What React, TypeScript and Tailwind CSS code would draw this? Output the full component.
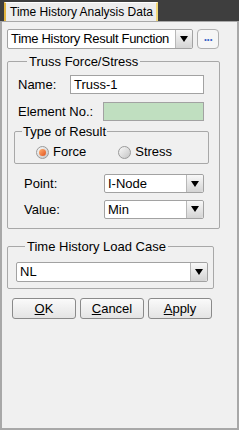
import React from "react";

const font = { fontFamily: '"Liberation Sans", Arial, sans-serif' };

function Arrow() {
    return (
        <div className="w-[17px] h-full flex items-center justify-center border-l border-[#b8b8b8] bg-gradient-to-b from-[#f8f8f8] to-[#d4d4d4] rounded-r-[2px]">
            <svg width="8" height="6" viewBox="0 0 8 6">
                <path d="M0 0H8L4 6Z" fill="#000" />
            </svg>
        </div>
    );
}

function Combo({ value, className, textClass = "" }: { value: string; className: string; textClass?: string }) {
    return (
        <div className={`flex items-stretch bg-white border border-[#a2a2a2] rounded-[2px] ${className}`}>
            <div className={`flex-1 pl-[3px] flex items-center overflow-hidden whitespace-nowrap ${textClass}`}>{value}</div>
            <Arrow />
        </div>
    );
}

function Radio({ checked }: { checked?: boolean }) {
    return (
        <div className="w-[13px] h-[13px] rounded-full border border-[#9a9a9a] bg-gradient-to-br from-[#fafafa] to-[#c4c4c4] flex items-center justify-center">
            {checked && <div className="w-[7px] h-[7px] rounded-full bg-gradient-to-br from-[#ffb070] to-[#e0501a]" />}
        </div>
    );
}

function Btn({ k, rest }: { k: string; rest: string }) {
    return (
        <button className="w-[64px] h-[21px] border border-[#8a8a8a] rounded-[3px] bg-gradient-to-b from-[#fafafa] to-[#e4e4e4] text-[13px] leading-none">
            <span className="underline">{k}</span>
            {rest}
        </button>
    );
}

export default function App() {
    return (
        <div className="w-[239px] h-[430px] bg-[#3e3e3e] flex flex-col text-[13px] text-black" style={font}>
            {/* Tab */}
            <div className="h-[21px] pt-[2px] pl-[4px] flex">
                <div className="h-[19px] pl-[4px] pr-[3px] flex items-center bg-[#ededed] border-l-2 border-r-2 border-t border-l-[#e2b440] border-r-[#f2d878] border-t-[#ffffff] whitespace-nowrap text-[12px]">
                    Time History Analysis Data
                </div>
            </div>

            {/* Body */}
            <div className="flex-1 bg-[#f0f0f0] border-l-2 border-r-2 border-b-2 border-t border-[#a8a8a8] pl-[5px] pt-[7px]">
                <div className="w-[212px] flex gap-[4px]">
                    <Combo
                        value="Time History Result Function"
                        className="w-[186px] h-[20px]"
                        textClass="pl-[2px] tracking-[-0.3px]"
                    />
                    <div className="w-[22px] h-[20px] border border-[#b0b0b0] rounded-[4px] bg-[#f6f6f6] flex items-end justify-center pb-[5px] text-[#3a64c8] text-[12px] leading-none tracking-[-0.5px] font-bold">
                        ...
                    </div>
                </div>

                {/* Truss Force/Stress */}
                <fieldset className="mt-[5px] w-[207px] border border-[#a8a8a8] rounded-[2px] px-[10px] pb-[9px]">
                    <legend className="ml-[9px] px-[2px] leading-[15px]">Truss Force/Stress</legend>
                    <div className="mt-[6px] flex items-center h-[19px]">
                        <span className="w-[52px]">Name:</span>
                        <div className="w-[134px] h-[19px] bg-white border border-[#a2a2a2] flex items-center pl-[3px]">Truss-1</div>
                    </div>
                    <div className="mt-[8px] flex items-center h-[19px]">
                        <span className="w-[85px]">Element No.:</span>
                        <div className="w-[101px] h-[19px] bg-[#c0dfc0] border border-[#a2a2a2]" />
                    </div>

                    <fieldset className="mt-[3px] -ml-[4px] w-[195px] border border-[#a8a8a8] rounded-[2px] pb-[3px]">
                        <legend className="ml-[7px] px-[1px] leading-[15px]">Type of Result</legend>
                        <div className="mt-[5px] h-[16px] flex items-center">
                            <div className="ml-[21px]"><Radio checked /></div>
                            <span className="ml-[4px]">Force</span>
                            <div className="ml-[32px]"><Radio /></div>
                            <span className="ml-[4px]">Stress</span>
                        </div>
                    </fieldset>

                    <div className="mt-[10px] flex items-center pl-[6px]">
                        <span className="w-[80px]">Point:</span>
                        <Combo value="I-Node" className="w-[100px] h-[19px]" />
                    </div>
                    <div className="mt-[6px] flex items-center pl-[6px]">
                        <span className="w-[80px]">Value:</span>
                        <Combo value="Min" className="w-[100px] h-[19px]" />
                    </div>
                </fieldset>

                {/* Time History Load Case */}
                <fieldset className="mt-[10px] w-[207px] border border-[#a8a8a8] rounded-[2px] pl-[8px] pr-[5px] pb-[6px]">
                    <legend className="ml-[9px] px-[2px] leading-[15px]">Time History Load Case</legend>
                    <Combo value="NL" className="mt-[8px] w-[192px] h-[20px]" />
                </fieldset>

                <div className="mt-[9px] pl-[5px] flex gap-[4px]">
                    <Btn k="O" rest="K" />
                    <Btn k="C" rest="ancel" />
                    <Btn k="A" rest="pply" />
                </div>
            </div>
        </div>
    );
}
